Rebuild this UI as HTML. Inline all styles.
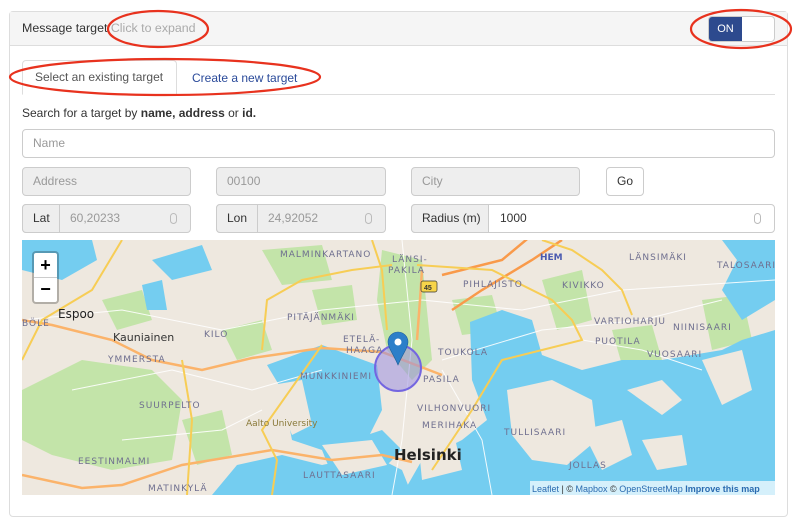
<!DOCTYPE html>
<html><head><meta charset="utf-8"><style>
*{box-sizing:border-box;margin:0;padding:0}
body{width:800px;height:528px;background:#fff;font-family:"Liberation Sans",sans-serif;position:relative;overflow:hidden;color:#333}
.abs{position:absolute;white-space:nowrap}
.panel{left:9px;top:11px;width:779px;height:506px;border:1px solid #ddd;border-radius:4px;background:#fff}
.head{left:10px;top:12px;width:777px;height:34px;background:#f5f5f5;border-bottom:1px solid #ddd}
.inp{position:absolute;height:29px;border:1px solid #ccc;border-radius:4px;font-size:12px;color:#999;padding:0 10px;line-height:27px;background:#eee}
.addon{position:absolute;height:29px;border:1px solid #ccc;background:#eee;font-size:12px;color:#333;padding:0 10px;line-height:27px;border-radius:4px 0 0 4px;white-space:nowrap}
.spin{position:absolute;width:7px;height:11px;border:1px solid #bbb;border-radius:4px}
.lbl text{font:9px "DejaVu Sans",sans-serif;fill:#6f6f8f;letter-spacing:1px}
</style></head><body>
<div class="abs panel"></div>
<div class="abs head"></div>
<div class="abs" style="left:22px;top:21px;font-size:12.4px;color:#333">Message target <span style="color:#aaa">Click to expand</span></div>
<div class="abs" style="left:708px;top:16px;width:67px;height:26px;border:1px solid #ccc;border-radius:4px;background:#fff;overflow:hidden">
<div style="width:33px;height:24px;background:#2d4a8e;color:#fff;font-size:11px;text-align:center;line-height:24px">ON</div></div>
<div class="abs" style="left:22px;top:94px;width:753px;border-top:1px solid #ddd"></div>
<div class="abs" style="left:22px;top:60px;width:155px;height:35px;border:1px solid #ddd;border-bottom:1px solid #fff;border-radius:4px 4px 0 0;background:#fff;font-size:12px;color:#555;padding:0 12px;line-height:33px">Select an existing target</div>
<div class="abs" style="left:192px;top:71px;font-size:12px;color:#2a4a9a">Create a new target</div>
<div class="abs" style="left:22px;top:106px;font-size:12px;color:#333">Search for a target by <b>name, address</b> or <b>id.</b></div>
<div class="inp" style="left:22px;top:129px;width:753px;background:#fff">Name</div>
<div class="inp" style="left:22px;top:167px;width:169px">Address</div>
<div class="inp" style="left:216px;top:167px;width:170px">00100</div>
<div class="inp" style="left:411px;top:167px;width:169px">City</div>
<div class="abs" style="left:606px;top:167px;width:38px;height:29px;border:1px solid #ccc;border-radius:4px;font-size:12px;line-height:27px;text-align:center;color:#333">Go</div>
<div class="inp" style="left:22px;top:204px;width:169px"></div>
<div class="addon" style="left:22px;top:204px;width:38px">Lat</div>
<div class="abs" style="left:70px;top:211px;font-size:12px;color:#999">60,20233</div>
<div class="spin" style="left:170px;top:213px"></div>
<div class="inp" style="left:216px;top:204px;width:170px"></div>
<div class="addon" style="left:216px;top:204px;width:42px">Lon</div>
<div class="abs" style="left:268px;top:211px;font-size:12px;color:#999">24,92052</div>
<div class="spin" style="left:365px;top:213px"></div>
<div class="inp" style="left:411px;top:204px;width:364px;background:#fff"></div>
<div class="addon" style="left:411px;top:204px;width:78px">Radius (m)</div>
<div class="abs" style="left:500px;top:211px;font-size:12px;color:#333">1000</div>
<div class="spin" style="left:754px;top:213px"></div>
<svg class="abs" style="left:22px;top:240px" width="753" height="255" viewBox="0 0 753 255">
<rect width="753" height="255" fill="#eee8df"/>
<g fill="#c3e4a9">
<path d="M0 150 L60 120 L130 130 L160 160 L150 220 L90 230 L30 215 L0 200Z"/>
<path d="M360 10 L400 20 L410 120 L390 140 L365 110 L355 60Z"/>
<path d="M200 90 L240 80 L250 110 L215 120Z"/>
<path d="M80 60 L120 50 L130 80 L95 90Z"/>
<path d="M240 10 L300 5 L310 40 L260 45Z"/>
<path d="M520 40 L560 30 L570 80 L535 90Z"/>
<path d="M590 90 L630 85 L640 120 L600 125Z"/>
<path d="M160 180 L200 170 L210 215 L175 225Z"/>
<path d="M430 60 L470 55 L480 90 L440 95Z"/>
<path d="M680 60 L720 55 L730 100 L690 110Z"/>
<path d="M290 50 L330 45 L335 80 L300 85Z"/>
</g>
<g fill="#74cdf0">
<path d="M0 0 L70 0 L75 20 L40 40 L0 30Z"/>
<path d="M130 20 L180 5 L190 30 L150 40Z"/>
<path d="M120 45 L140 40 L145 70 L125 70Z"/>
<path d="M245 125 L300 105 L355 125 L360 170 L345 200 L300 210 L270 200 L260 150 Z"/>
<path d="M190 255 L215 225 L260 215 L300 225 L350 215 L380 230 L390 255Z"/>
<path d="M300 210 L360 190 L380 210 L360 230 L310 235Z"/>
<path d="M448 82 L480 70 L510 80 L520 115 L560 130 L600 120 L640 120 L700 110 L720 100 L753 90 L753 255 L380 255 L400 220 L440 200 L465 180 L450 140 Z"/>
<path d="M700 0 L753 0 L753 60 L720 80 L700 50 L715 20Z"/>
</g>
<g fill="#eee8df">
<path d="M485 150 L530 140 L570 160 L575 200 L545 225 L510 220 L490 195Z"/>
<path d="M560 190 L600 180 L610 215 L580 230Z"/>
<path d="M605 150 L640 140 L660 160 L640 175Z"/>
<path d="M620 200 L660 195 L665 225 L635 230Z"/>
<path d="M250 145 L280 140 L290 185 L270 195 Z"/>
<path d="M300 205 L350 200 L365 225 L320 235Z"/>
<path d="M395 190 L430 185 L440 230 L400 240Z"/>
<path d="M680 120 L720 110 L730 150 L700 165Z"/>
</g>
<g fill="none" stroke="#fff" stroke-width="1" opacity=".9">
<path d="M0 80 L100 70 L200 90 L300 70 L400 60 L500 70 L600 50 L753 40"/>
<path d="M50 150 L150 130 L230 150 L300 130"/>
<path d="M380 0 L390 100 L380 200 L370 255"/>
<path d="M420 120 L520 90 L620 80 L700 60"/>
<path d="M100 200 L200 190 L240 170"/>
<path d="M420 130 L460 200 L470 255"/>
<path d="M560 100 L620 110 L680 130"/>
</g>
<g fill="none" stroke="#fbb36a" stroke-width="2.5">
<path d="M0 80 L30 85 L90 100 L130 120 L180 130 L230 118 L300 108 L360 112 L420 135"/>
<path d="M0 235 L60 248 L100 245 L160 225 L250 210 L310 220 L360 215 L390 222"/>
<path d="M400 30 L398 60 L395 100"/>
<path d="M420 35 L440 30 L480 20 L510 -5" stroke="#f99a4a"/>
<path d="M430 70 L460 50 L510 20 L540 0" stroke="#f99a4a"/>
</g>
<g fill="none" stroke="#f7cd55" stroke-width="2">
<path d="M0 120 L20 80 L70 50 L100 0"/>
<path d="M300 105 L240 190 L255 220 L250 255"/>
<path d="M160 120 L170 180 L165 255"/>
<path d="M240 110 L245 60 L280 40 L330 30 L370 25"/>
<path d="M350 0 L360 30 L365 90"/>
<path d="M395 25 L470 30 L530 60 L550 80 L560 100 L520 110 L480 120 L450 170 L430 200 L410 230"/>
<path d="M520 0 L550 10 L580 30 L600 50 L610 75"/>
</g>
<rect x="399" y="41" width="16" height="11" rx="2" fill="#f7d44a" stroke="#333" stroke-width=".7"/>
<text x="402" y="50" font-size="7" font-family="Liberation Sans" font-weight="bold" fill="#333">45</text>
<circle cx="376" cy="128" r="23" fill="#9b8ee0" fill-opacity=".55" stroke="#7466e0" stroke-width="2"/>
<path d="M376 125 C372 115 366 108 366 102 A10 10 0 0 1 386 102 C386 108 380 115 376 125Z" fill="#2c7fc9" stroke="#1e5f99" stroke-width=".6"/>
<circle cx="376" cy="102" r="3.5" fill="#fff"/>
<g class="lbl">
<text x="258" y="17">MALMINKARTANO</text>
<text x="370" y="22">LÄNSI-</text><text x="366" y="33">PAKILA</text>
<text x="607" y="20">LÄNSIMÄKI</text>
<text x="695" y="28">TALOSAARI</text>
<text x="441" y="47">PIHLAJISTO</text>
<text x="540" y="48">KIVIKKO</text>
<text x="265" y="80">PITÄJÄNMÄKI</text>
<text x="572" y="84">VARTIOHARJU</text>
<text x="651" y="90">NIINISAARI</text>
<text x="0" y="86">BÖLE</text>
<text x="182" y="97">KILO</text>
<text x="321" y="102">ETELÄ-</text><text x="324" y="113">HAAGA</text>
<text x="573" y="104">PUOTILA</text>
<text x="416" y="115">TOUKOLA</text>
<text x="625" y="117">VUOSAARI</text>
<text x="86" y="122">YMMERSTA</text>
<text x="278" y="139">MUNKKINIEMI</text>
<text x="401" y="142">PASILA</text>
<text x="395" y="171">VILHONVUORI</text>
<text x="117" y="168">SUURPELTO</text>
<text x="400" y="188">MERIHAKA</text>
<text x="482" y="195">TULLISAARI</text>
<text x="56" y="224">EESTINMALMI</text>
<text x="281" y="238">LAUTTASAARI</text>
<text x="547" y="228">JOLLAS</text>
<text x="126" y="251">MATINKYLÄ</text>
</g>
<text x="518" y="20" font-size="9" font-family="DejaVu Sans" fill="#4a5ab0" font-weight="bold">HEM</text>
<text x="36" y="78" font-size="12" font-family="DejaVu Sans" fill="#222">Espoo</text>
<text x="91" y="101" font-size="11" font-family="DejaVu Sans" fill="#333">Kauniainen</text>
<text x="224" y="186" font-size="9" font-family="DejaVu Sans" fill="#8a7a3a">Aalto University</text>
<text x="372" y="220" font-size="15" font-family="DejaVu Sans" font-weight="bold" fill="#222">Helsinki</text>
<rect x="508" y="241" width="245" height="14" fill="#fff" fill-opacity=".7"/>
<text x="510" y="252" font-size="9" font-family="Liberation Sans" fill="#333"><tspan fill="#2a6bb0">Leaflet</tspan> | © <tspan fill="#2a6bb0">Mapbox</tspan> © <tspan fill="#2a6bb0">OpenStreetMap</tspan> <tspan fill="#2a6bb0" font-weight="bold">Improve this map</tspan></text>
</svg>
<div class="abs" style="left:32px;top:251px;width:27px;height:53px;border:2px solid rgba(0,0,0,.25);border-radius:4px;background:#fff;background-clip:padding-box">
<div style="height:25px;border-bottom:1px solid #ccc;text-align:center;font:bold 18px 'Liberation Sans';line-height:25px;color:#000">+</div>
<div style="height:24px;text-align:center;font:bold 18px 'Liberation Sans';line-height:22px;color:#000">−</div></div>
<svg class="abs" style="left:0;top:0" width="800" height="528">
<g fill="none" stroke="#e8321e" stroke-width="2.2">
<ellipse cx="158" cy="29" rx="50" ry="18"/>
<ellipse cx="165" cy="77" rx="155" ry="18"/>
<ellipse cx="741" cy="29" rx="50" ry="19"/>
</g></svg>
</body></html>
